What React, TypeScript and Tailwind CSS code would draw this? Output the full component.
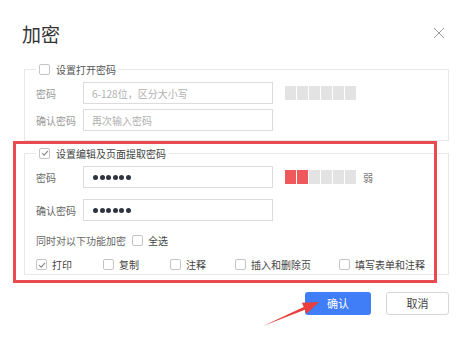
import React from "react";

const font = { fontFamily: '"Noto Sans CJK SC", "Noto Sans", sans-serif' };

const Box = ({ checked }: { checked?: boolean }) => (
  <span className="flex h-[11px] w-[11px] shrink-0 items-center justify-center rounded-[2px] border border-[#c4c4c4] bg-white">
    {checked && (
      <svg width="8" height="8" viewBox="0 0 8 8" fill="none">
        <path d="M1 4.2 L3.2 6.2 L7 1.8" stroke="#8a8a8a" strokeWidth="1.1" />
      </svg>
    )}
  </span>
);

const Strength = ({ red }: { red: number }) => (
  <div className="ml-[12px] flex h-[14px] gap-px">
    {[0, 1, 2, 3, 4, 5].map((i) => (
      <span key={i} className={i < red ? "w-[11px] bg-[#f0595c]" : "w-[11px] bg-[#e3e3e3]"} />
    ))}
  </div>
);

const Dots = () => (
  <span className="flex gap-[1.6px]">
    {[0, 1, 2, 3, 4, 5].map((i) => (
      <span key={i} className="h-[5px] w-[5px] rounded-full bg-[#2d3340]" />
    ))}
  </span>
);

const options: [string, boolean, string][] = [
  ["打印", true, "w-[67px]"],
  ["复制", false, "w-[67px]"],
  ["注释", false, "w-[65px]"],
  ["插入和删除页", false, "w-[104px]"],
  ["填写表单和注释", false, ""],
];

export default function App() {
  return (
    <div className="relative h-[338px] w-[474px] overflow-hidden bg-white" style={font}>
      <div className="flex items-start justify-between pl-[22px] pr-[29px] pt-[21px]">
        <h1 className="text-[19px] leading-[26px] text-[#333]">加密</h1>
        <svg width="12" height="12" viewBox="0 0 12 12" className="mt-[6px]">
          <path d="M1 1 L11 11 M11 1 L1 11" stroke="#9a9a9a" strokeWidth="1" />
        </svg>
      </div>

      <fieldset className="mx-[24px] mr-[25px] mt-[15px] border border-[#e8e8e8] pb-[9px] pl-[11px] pt-[6px]">
        <legend className="flex h-[14px] items-center gap-[6px] px-[3px] text-[10px] text-[#555]">
          <Box />
          设置打开密码
        </legend>
        <div className="flex h-[22px] items-center">
          <span className="w-[47px] text-[10px] text-[#999]">密码</span>
          <div className="flex h-[22px] w-[190px] items-center border border-[#dcdcdc] pl-[8px] text-[10px] text-[#b0b0b0]">
            6-128位，区分大小写
          </div>
          <Strength red={0} />
        </div>
        <div className="mt-[5px] flex h-[22px] items-center">
          <span className="w-[47px] text-[10px] text-[#999]">确认密码</span>
          <div className="flex h-[22px] w-[190px] items-center border border-[#dcdcdc] pl-[8px] text-[10px] text-[#b0b0b0]">
            再次输入密码
          </div>
        </div>
      </fieldset>

      <fieldset className="mx-[24px] mr-[25px] mt-[5px] border border-[#e8e8e8] pb-[3px] pl-[11px] pt-[6px]">
        <legend className="flex h-[14px] items-center gap-[6px] px-[3px] text-[10px] text-[#444]">
          <Box checked />
          设置编辑及页面提取密码
        </legend>
        <div className="flex h-[22px] items-center">
          <span className="w-[47px] text-[10px] text-[#666]">密码</span>
          <div className="flex h-[22px] w-[190px] items-center border border-[#dcdcdc] pl-[9px]">
            <Dots />
          </div>
          <Strength red={2} />
          <span className="ml-[7px] text-[10px] text-[#777]">弱</span>
        </div>
        <div className="mt-[11px] flex h-[22px] items-center">
          <span className="w-[47px] text-[10px] text-[#666]">确认密码</span>
          <div className="flex h-[22px] w-[190px] items-center border border-[#dcdcdc] pl-[9px]">
            <Dots />
          </div>
        </div>
        <div className="mt-[13px] flex h-[13px] items-center text-[10px] text-[#666]">
          同时对以下功能加密
          <span className="ml-[6px] flex items-center gap-[5px] text-[#444]">
            <Box />
            全选
          </span>
        </div>
        <div className="mt-[11px] flex h-[13px] items-center text-[10px] text-[#444]">
          {options.map(([t, c, w]) => (
            <span key={t} className={`flex items-center gap-[5px] ${w}`}>
              <Box checked={c} />
              {t}
            </span>
          ))}
        </div>
      </fieldset>

      <div className="mt-[17px] flex justify-end gap-[15px] pr-[25px]">
        <button className="flex h-[23px] w-[66px] items-center justify-center rounded-[3px] bg-[#3f7ef6] text-[11px] text-white">
          确认
        </button>
        <button className="flex h-[23px] w-[63px] items-center justify-center rounded-[3px] border border-[#d6d6d6] bg-white text-[11px] text-[#444]">
          取消
        </button>
      </div>

      <div className="pointer-events-none absolute left-[13px] top-[141px] h-[142px] w-[424px] border-[3px] border-[#e84a4f]" />

      <svg className="pointer-events-none absolute left-0 top-0" width="474" height="338">
        <polygon
          points="263,326 304.9,309.7 306.7,313.8 319,302 301.9,302.8 303.7,306.9"
          fill="#ea3f3c"
        />
      </svg>
    </div>
  );
}
